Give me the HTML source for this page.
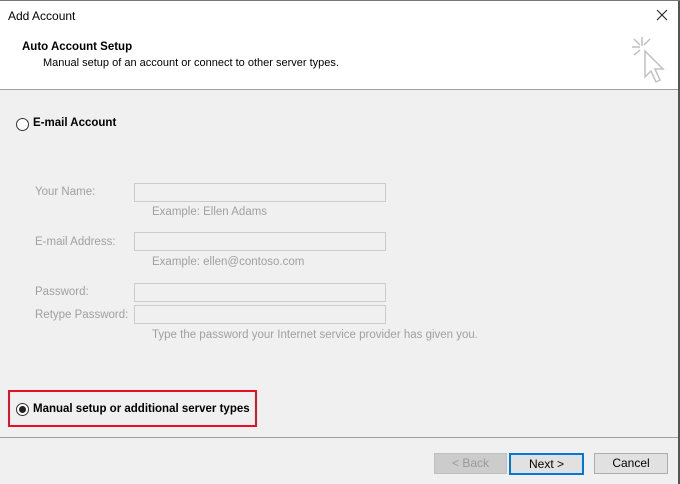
<!DOCTYPE html>
<html><head><style>
body{margin:0;width:680px;height:484px;overflow:hidden;font-family:"Liberation Sans",sans-serif;font-size:12px;position:relative;background:#f0f0f0;}
.a{position:absolute;}
.lbl{color:#a0a0a0;font-size:11.5px;}
.inp{position:absolute;left:134px;width:250px;height:17px;border:1px solid #ccc;background:#f0f0f0;}
.btn{position:absolute;top:453px;height:19px;border:1px solid #adadad;background:#e1e1e1;text-align:center;line-height:19px;font-size:12px;}
</style></head><body>
<div class="a" style="left:0;top:0;width:678px;height:89px;background:#fff;border-bottom:1px solid #a0a0a0"></div>
<div class="a" style="left:678px;top:0;width:2px;height:484px;background:#555"></div>
<div class="a" style="left:0;top:0;width:680px;height:1px;background:#777"></div>
<div class="a" style="left:8px;top:9px;font-size:12px">Add Account</div>
<svg class="a" style="left:656px;top:9px" width="12" height="12"><path d="M1 1L11 11M11 1L1 11" stroke="#222" stroke-width="1.1"/></svg>
<div class="a" style="left:22px;top:41px;font-weight:bold;font-size:11.5px">Auto Account Setup</div>
<div class="a" style="left:43px;top:57px;font-size:11px">Manual setup of an account or connect to other server types.</div>
<svg class="a" style="left:630px;top:36px" width="38" height="50" viewBox="0 0 38 50"><g stroke="#c0c0c0" stroke-width="1.5" fill="none"><path d="M12 1v9M2 11h8M4 3l6 6M20 3l-6 6M4 19l6-5"/><path d="M15 15v26l6-6 5 11 4-2-5-11h8z" fill="#fff"/></g></svg>
<div class="a" style="left:16px;top:118px;width:11px;height:11px;border:1px solid #333;border-radius:50%;background:#fff"></div>
<div class="a" style="left:33px;top:117px;font-weight:bold;font-size:11.5px">E-mail Account</div>
<div class="a lbl" style="left:35px;top:186px">Your Name:</div>
<div class="inp" style="top:183px"></div>
<div class="a lbl" style="left:152px;top:206px">Example: Ellen Adams</div>
<div class="a lbl" style="left:35px;top:236px">E-mail Address:</div>
<div class="inp" style="top:232px"></div>
<div class="a lbl" style="left:152px;top:256px">Example: ellen@contoso.com</div>
<div class="a lbl" style="left:35px;top:286px">Password:</div>
<div class="inp" style="top:283px"></div>
<div class="a lbl" style="left:35px;top:309px">Retype Password:</div>
<div class="inp" style="top:305px"></div>
<div class="a lbl" style="left:152px;top:329px">Type the password your Internet service provider has given you.</div>
<div class="a" style="left:8px;top:390px;width:245px;height:33px;border:2px solid #e81123"></div>
<div class="a" style="left:16px;top:403px;width:11px;height:11px;border:1px solid #333;border-radius:50%;background:#fff"></div>
<div class="a" style="left:19px;top:406px;width:7px;height:7px;border-radius:50%;background:#222"></div>
<div class="a" style="left:33px;top:403px;font-weight:bold;font-size:11.5px">Manual setup or additional server types</div>
<div class="a" style="left:0;top:437px;width:678px;height:1px;background:#a0a0a0"></div>
<div class="btn" style="left:434px;width:71px;color:#999;background:#ccc;border-color:#bfbfbf">&lt; Back</div>
<div class="btn" style="left:509px;width:71px;border:2px solid #0078d7;height:18px;line-height:18px">Next &gt;</div>
<div class="btn" style="left:594px;width:72px">Cancel</div>
</body></html>
